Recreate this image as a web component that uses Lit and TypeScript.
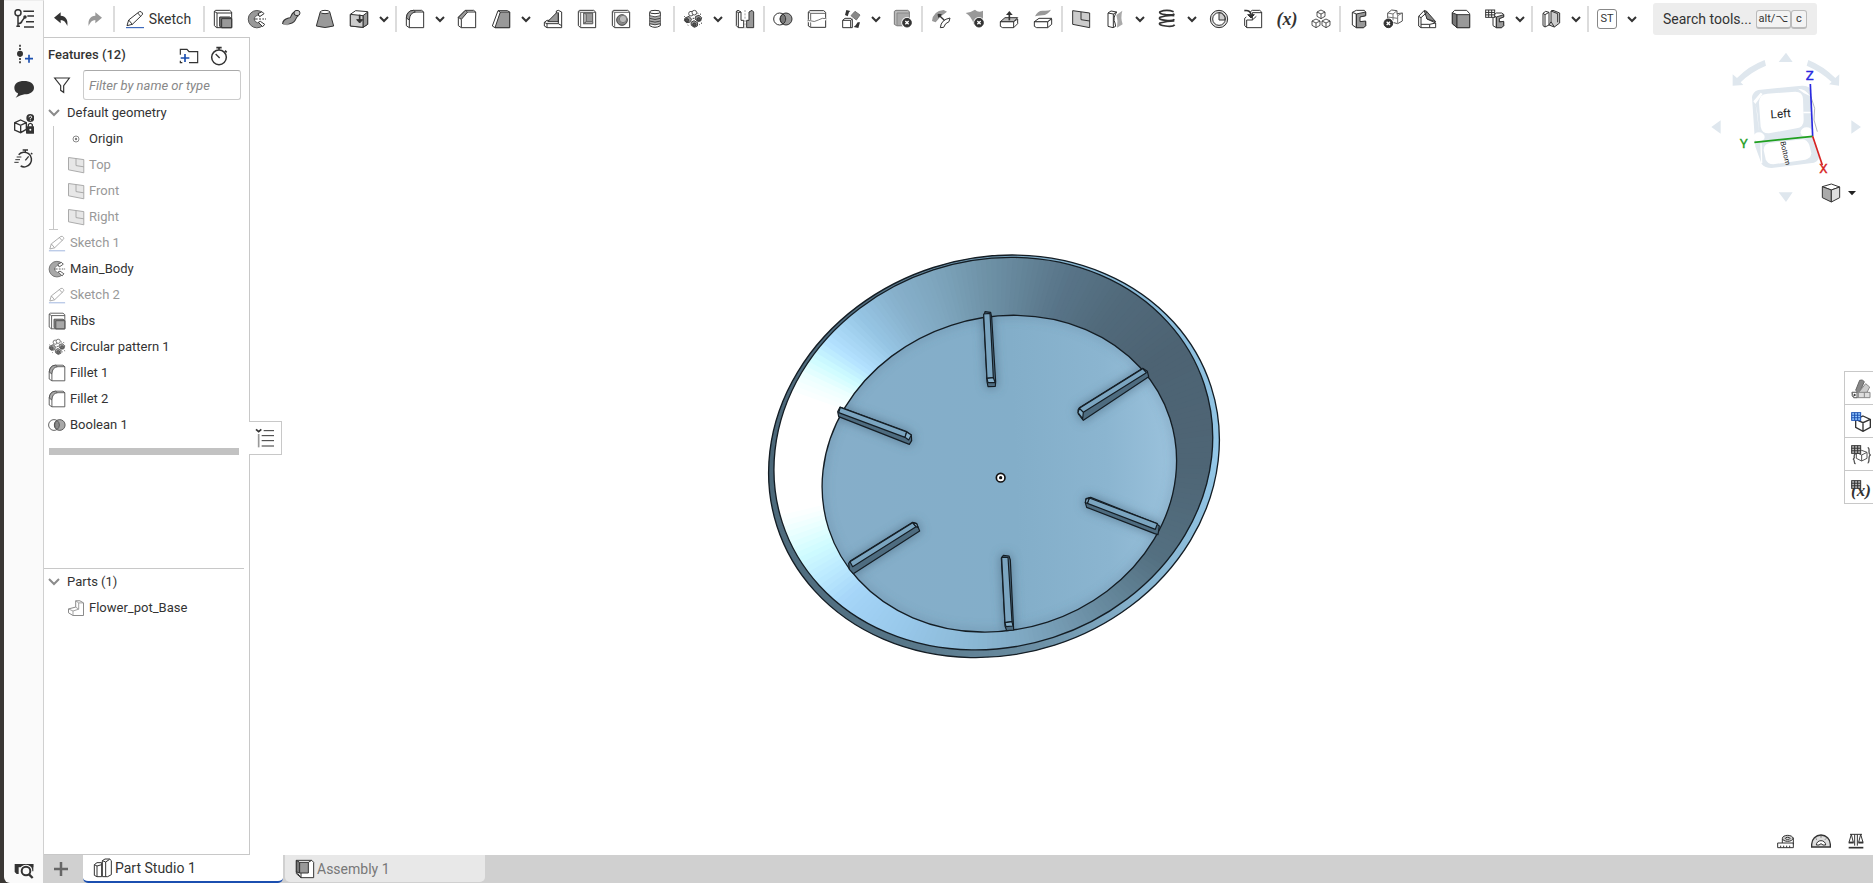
import { LitElement, html, svg, css, nothing } from "lit";
import { customElement, state } from "lit/decorators.js";
import { classMap } from "lit/directives/class-map.js";

// Every glyph is drawn on a 60 x 60 grid.
const D = "#333";
const G = "#999";
const B = "#1b4fb0";

const grid = (x: number, y: number, w: number, h: number, line: string, fill: string) => svg`
  <rect x=${x} y=${y} width=${w} height=${h} fill=${fill} stroke=${line}></rect>
  <path stroke=${line} fill="none" d="M${x} ${y + h / 3}h${w}M${x} ${y + (2 * h) / 3}h${w}M${x + w / 3} ${y}v${h}M${x + (2 * w) / 3} ${y}v${h}"></path>`;

const cross = (x: number, y: number) => svg`
  <circle cx=${x} cy=${y} r="13" fill=${D} stroke=${D}></circle>
  <path d="M${x - 5} ${y - 5}l10 10m0 -10l-10 10" stroke="#fff" stroke-width="4"></path>`;

const smallCube = (x: number, y: number) => svg`
  <path fill="#fff" d="M${x} ${y - 13}l12 6v13l-12 7l-12 -7v-13zM${x - 12} ${y - 7}l12 6l12 -6M${x} ${y - 1}v14"></path>`;

const ICONS: Record<string, unknown> = {
  undo: svg`<path fill=${D} stroke="none" d="M9 26L29 10V20C44 21 52 32 49 51C44 39 39 34 29 33V43Z"></path>`,
  redo: svg`<path fill=${G} stroke="none" d="M51 26L31 10V20C16 21 8 32 11 51C16 39 21 34 31 33V43Z"></path>`,
  sketch: svg`<path fill="#fff" d="M6 50l5 -17L43 8q6 -2 9 4q2 4 -2 7L22 46zM11 33l11 13M38 12l9 10"></path><path stroke=${B} d="M3 56H57"></path>`,
  extrude: svg`<path fill="#fff" d="M4 7L8 4H50L56 9V56H11L4 50Z"></path><path d="M4 7L12 12H56M12 12V56"></path><path fill="#777" d="M20 24H50L56 29V56H26L20 52Z"></path><path fill=${G} d="M26 29H56V56H26Z"></path>`,
  revolve: svg`<path fill=${G} stroke="#555" d="M48 12A26 26 0 1 0 48 49L39 39A11 11 0 1 1 39 21Z"></path><path fill="#fff" d="M33 14l12 -6l6 6l-13 9zM34 40l6 -3l13 9l-6 7z"></path><path d="M22 30h10M36 30h6M46 30h5M54 30h3"></path>`,
  sweep: svg`<path stroke=${D} stroke-width="20" d="M13 46C14 33 26 38 33 32S37 16 50 13"></path><path stroke=${G} stroke-width="14" d="M13 48C14 33 26 38 33 32S37 16 51 13"></path><ellipse cx="48" cy="12" rx="9" ry="8" fill="#ccc"></ellipse>`,
  loft: svg`<path fill=${G} d="M16 8L4 51Q30 60 56 51L44 8Z"></path><ellipse cx="30" cy="9" rx="14" ry="5" fill="#fff"></ellipse>`,
  thicken: svg`<path fill="#fff" d="M4 16L20 5L56 8V46L42 55L4 51Z"></path><path fill=${G} d="M42 20L56 9V46L42 55Z"></path><path fill="#ccc" d="M4 16L42 20V55L4 51Z"></path><path stroke-width="5" d="M32 17V36"></path><path fill=${D} d="M23 32h18l-9 10z"></path>`,
  fillet: svg`<path fill="#fff" d="M13 56L4 50V27Q6 5 25 4H50L56 9V56Z"></path><path fill=${G} d="M4 27Q6 5 25 4L32 9Q14 11 13 33Z"></path><path d="M32 9H56M13 33V56"></path>`,
  chamfer: svg`<path fill="#fff" d="M13 56L4 50V25L25 4H50L56 9V56Z"></path><path fill=${G} d="M4 25L25 4L32 9L13 31Z"></path><path d="M32 9H56M13 31V56"></path>`,
  draft: svg`<path fill="#fff" d="M4 51L21 5H49L56 9V56H12Z"></path><path fill=${G} d="M28 9H56V56H12Z"></path><path d="M21 5L28 9"></path>`,
  rib: svg`<path fill="#fff" d="M4 40L12 34H40V6L46 4L56 9V56H12L4 51Z"></path><path fill=${G} d="M14 38L42 10L46 14V38Z"></path><path d="M12 44H46L56 50M46 10V44M4 40L12 44V56"></path>`,
  shell: svg`<path fill="#fff" d="M4 7L8 4H50L56 9V56H11L4 50Z"></path><path d="M4 7L11 10H56M11 10V56" stroke="#666"></path><path fill=${G} stroke="#555" d="M20 12H47V44H20Z"></path><path fill="#bbb" stroke="#666" d="M20 44L28 38H47V44ZM20 12l8 4v22l-8 6z"></path>`,
  hole: svg`<path fill="#fff" d="M4 7L8 4H50L56 9V56H11L4 50Z"></path><path d="M4 7L11 10H56M11 10V56" stroke="#666"></path><circle cx="33" cy="33" r="16" fill="#888" stroke="#444"></circle><circle cx="36" cy="30" r="11" fill="#bbb" stroke="#777"></circle>`,
  thread: svg`<path fill="#fff" d="M14 10V50Q30 60 46 50V10Z"></path><path fill="#aaa" stroke="none" d="M14 20Q30 27 46 20V44Q30 52 14 44Z"></path><path d="M14 20Q30 27 46 20M14 28Q30 35 46 28M14 36Q30 43 46 36M14 44Q30 51 46 44" stroke-width="2.5"></path><ellipse cx="30" cy="9" rx="16" ry="5" fill="#fff"></ellipse>`,
  pattern: svg`<g fill="#999" stroke="#444"><path d="M6 27l12 -5l8 9l-6 9l-9 1l-7 -6zM38 22l10 -3l8 7l-3 10l-9 1l-8 -7zM24 40l9 -5l11 6l-1 10l-9 4l-9 -6z"></path></g><g fill="#fff" stroke="#555"><circle cx="24" cy="14" r="7"></circle><circle cx="34" cy="11" r="7"></circle></g><g fill="#555" stroke="#333"><circle cx="12" cy="34" r="5"></circle><circle cx="47" cy="31" r="5"></circle><circle cx="34" cy="47" r="5"></circle></g><path d="M43 12l3 2M51 15l3 1M54 42l3 1M4 22l2 2M14 48l2 1M48 46l2 1" stroke-width="3"></path><path d="M29 28h4"></path>`,
  mirror: svg`<path fill="#fff" d="M4 7L9 4L18 9V34H26V56H10L4 50Z"></path><path fill=${G} d="M56 9L51 4L42 9V34H35V56H56Z"></path><path stroke="#777" stroke-dasharray="6 4" stroke-width="2" d="M30 3V58"></path><path d="M4 7L10 11V56M10 11L18 9"></path>`,
  boolean: svg`<circle cx="20" cy="30" r="18" fill="#fff"></circle><circle cx="39" cy="30" r="18" fill=${G}></circle><path fill="#777" d="M30 15A18 18 0 0 1 30 45A18 18 0 0 1 30 15Z"></path>`,
  split: svg`<path fill="#fff" d="M4 9L9 5H50L56 10V55H11L4 51Z"></path><path d="M4 9L11 13H56M11 13V55" stroke="#666"></path><path stroke="#fff" stroke-width="7" d="M2 36H9Q22 42 34 34T58 31"></path><path d="M2 35H9Q22 41 34 33T58 29" stroke-width="2"></path>`,
  transform: svg`<path fill="#fff" d="M5 34L12 28H30L34 32V56H5Z"></path><path d="M5 34H29V56M29 34l5 -4"></path><path fill="#888" stroke="#777" d="M30 20L42 7L57 18L46 33Z"></path><path fill=${D} stroke="none" d="M12 18L16 3L28 6L24 10L20 22ZM57 40L52 57L38 54L44 49L50 40Z"></path>`,
  deletePart: svg`<path fill="#bbb" stroke="#777" d="M4 7L9 4H44L49 8V50H11L4 46Z"></path><path fill="#aaa" stroke="#888" d="M12 12H49V50H12Z"></path><circle cx="42" cy="41" r="17" fill="#fff" stroke="none"></circle>${cross(42, 41)}`,
  modifyFillet: svg`<path fill=${G} stroke="none" d="M3 36Q6 6 38 3L48 8L30 22L14 40Z"></path><path fill="#fff" d="M28 56Q30 32 57 27L54 38Q42 42 38 55Z"></path><path stroke-width="4" d="M40 34L24 19"></path><path fill=${D} d="M21 16l10 1l-8 8z"></path>`,
  deleteFace: svg`<path fill=${G} stroke="none" d="M2 12Q18 10 30 2Q40 12 54 5V32Q42 22 26 46Q20 22 2 12Z"></path><circle cx="42" cy="41" r="17" fill="#fff" stroke="none"></circle>${cross(42, 41)}`,
  moveFace: svg`<path fill="#fff" d="M4 38V52L11 56H44L56 44V30L44 38Z"></path><path fill="#bbb" d="M4 38L18 26H56L44 38Z"></path><path d="M44 38V56"></path><path stroke-width="5" d="M31 34V14"></path><path fill=${D} stroke="none" d="M21 18L31 6L41 18Z"></path>`,
  replaceFace: svg`<path fill="#fff" d="M4 38V52L11 56H44L56 46V30L44 38Z"></path><path fill="#fff" d="M4 38L18 28H56L44 38Z"></path><path d="M44 38V56"></path><path fill=${G} stroke="none" d="M6 22Q14 4 30 5T54 2Q44 18 28 19T6 22Z"></path>`,
  plane: svg`<path fill="#ccc" d="M5 5L56 12V56L5 46Z"></path><path d="M30 9V32L56 36"></path>`,
  offsetFace: svg`<path fill="#fff" d="M9 12L18 6L35 9Q22 28 30 42L32 52L24 56L9 52Z"></path><path d="M9 12L25 15V54M25 15L35 9"></path><path fill="#aaa" stroke="none" d="M34 18L52 5Q46 26 53 46L36 56Q40 36 34 18Z"></path>`,
  helix: svg`<g stroke-width="5"><path d="M50 8Q30 0 9 8Q4 14 26 17Q48 19 52 14M52 20Q30 18 9 25Q2 32 26 34Q48 36 52 31M52 36Q30 36 9 42Q2 48 26 51Q48 54 53 47"></path></g>`,
  clock: svg`<circle cx="30" cy="30" r="26" fill="#ddd"></circle><circle cx="30" cy="30" r="19" fill="#fff"></circle><path fill="#ccc" d="M30 11V33H48A19 19 0 0 0 30 11Z"></path>`,
  derived: svg`<path fill="#fff" d="M22 8L28 4H50L56 9V56H12L5 50V28L10 24"></path><path d="M28 11H56M11 33H28V11M11 33V56M28 33L40 22"></path><path stroke-width="5" d="M4 5Q20 2 24 16"></path><path fill=${D} d="M14 17H34L24 27Z"></path>`,
  cubes: svg`<g stroke-width="2.5">${smallCube(30, 16)}${smallCube(15, 43)}${smallCube(45, 43)}</g>`,
  sheet: svg`<path fill="#fff" d="M10 10L22 4H46L50 9V20L40 22L26 24V38H50V50L44 56H22L10 48Z"></path><path fill=${G} d="M22 15L50 9V20L33 24V38L50 36V50L44 56H22Z"></path><path d="M10 10L22 15V56"></path>`,
  sheetJoint: svg`<path fill="#fff" stroke="#555" d="M14 12L26 3L42 5V14L58 12V36L44 44L14 36Z"></path><path stroke="#777" d="M14 12L30 15V34M30 15L42 5M42 14L44 20V42M44 20L58 12M14 24L44 28"></path><circle cx="16" cy="43" r="16" fill="#fff" stroke="none"></circle>${cross(16, 43)}`,
  flange: svg`<path fill="#fff" d="M5 22L22 4L30 10V30L56 42V56H12L5 51Z"></path><path fill="#888" d="M22 6L28 6L56 38L30 30Z"></path><path d="M5 22L12 26V56M12 46H38L56 42M38 46V56M12 26L30 10"></path>`,
  solid: svg`<path fill="#fff" d="M4 11L11 4H47L56 14V56H18L4 44Z"></path><path fill="#777" d="M4 11L18 17V56L4 44Z"></path><path fill=${G} d="M18 17H56V56H18Z"></path>`,
  tableSheet: svg`<path fill="#fff" d="M24 20L34 12H50L56 16V24L42 28V38H56V50L50 56H34L24 50Z"></path><path fill=${G} d="M34 24L56 17V24L43 29V39L56 37V50L50 56H34Z"></path><path d="M24 20L34 24V56"></path>${grid(2, 3, 27, 22, D, "#fff")}`,
  bend: svg`<path fill="#fff" d="M6 13L14 7L24 10V48L12 54L6 50Z"></path><path fill="#ccc" d="M30 38L30 6L36 4L56 12V42L40 54L24 48Z"></path><path d="M12 17V54M6 13L12 17L24 10M30 38L40 54M30 6L50 14V40"></path>`,
  tree: svg`<g stroke-width="4.5"><circle cx="12" cy="11" r="9"></circle><path d="M12 20V52M7 52H18M12 44Q22 44 24 36L32 25"></path><circle cx="33" cy="24" r="3" fill=${D}></circle><path d="M28 7H60M40 21H60M36 38H60M30 54H60"></path></g>`,
  version: svg`<path stroke-width="5" stroke-dasharray="6 4" d="M18 2V60"></path><circle cx="18" cy="29" r="9" fill=${D} stroke="none"></circle><path stroke=${B} stroke-width="5" d="M33 44H57M45 32V56"></path>`,
  comment: svg`<path fill=${D} stroke="none" d="M30 6C48 6 60 14 60 26S48 46 32 46Q18 48 5 56Q13 49 12 43Q1 38 1 26C1 14 12 6 30 6Z"></path>`,
  help: svg`<g stroke-width="4"><path fill="#fff" d="M20 18L37 26V46L20 56L2 48V26ZM2 26L20 34L37 26M20 34V56"></path></g><circle cx="49" cy="12" r="12" fill=${D} stroke="none"></circle><path stroke="#fff" stroke-width="3" d="M45 10Q45 6 49 6T53 10Q53 12 49 14V16M49 18v2"></path><path stroke-width="4" d="M43 38V32Q49 24 55 32V38"></path><rect x="36" y="37" width="25" height="22" rx="2" fill=${D} stroke="none"></rect><circle cx="49" cy="47" r="3" fill="#fff" stroke="none"></circle>`,
  history: svg`<g stroke-width="4.5"><path d="M14 17A22 22 0 1 1 20 51"></path><path d="M26 3H42M34 3V9M51 12L55 16M34 34L44 22" stroke-width="4"></path><path d="M8 24H22M4 32H18M1 40H14" stroke-width="3"></path></g>`,
  searchTabs: svg`<path fill=${D} stroke="none" d="M2 12H58V22H2ZM2 22H14V42H8L2 36Z"></path><g stroke="#fafafa" stroke-width="14"><circle cx="36" cy="34" r="13" fill="#fafafa"></circle></g><circle cx="36" cy="33" r="13" stroke-width="6"></circle><path stroke-width="7" d="M45 43L56 54"></path><path stroke="none" fill=${D} d="M52 12H58V34H55Q55 20 45 14Z"></path>`,
  folder: svg`<path stroke-width="3.5" d="M4 26V10H24L30 17H56V50H30M4 44V50H10"></path><path stroke=${B} stroke-width="5" d="M5 36H31M18 24V48"></path>`,
  stopwatch: svg`<circle cx="30" cy="34" r="22" stroke-width="4.5"></circle><path stroke-width="5" d="M22 5H38M30 5V11M48 14L53 19"></path><path stroke-width="4" d="M20 24L32 36"></path>`,
  funnel: svg`<path stroke-width="3.5" d="M8 9H52L35 32V52L26 46V32Z"></path>`,
  origin: svg`<circle cx="30" cy="30" r="10" stroke="#666" stroke-width="3"></circle><circle cx="30" cy="30" r="4" fill="#666" stroke="none"></circle>`,
  part: svg`<path fill="#fff" stroke="#666" d="M29 6L43 6L55 13V55H20L5 46V33L29 27Z"></path><path stroke="#888" d="M29 6L39 13H55M39 13V34L20 40L5 33M20 40V55M29 27L39 34"></path>`,
  list: svg`<path stroke-width="5" d="M3 4L11 11L19 4"></path><path d="M26 8H57M20 23H57M20 38H57M20 54H57"></path><path stroke=${G} stroke-width="5" d="M11 18V58"></path>`,
  studio: svg`<path fill="#fff" d="M4 20L12 14H26V56H12L4 52ZM4 20L12 24L26 20M12 24V56"></path><path fill="#fff" d="M28 8L36 3H50L55 8V50L44 56H28ZM28 8L38 12V56M38 12L50 4"></path>`,
  assembly: svg`<path fill="#fff" d="M4 4H50L56 10V56H18L4 44Z"></path><path fill="#777" d="M4 4L14 10V42L4 38Z"></path><path fill=${G} d="M14 10H40V42H14Z"></path><path d="M4 38L18 56M40 10L50 4M18 42V56"></path>`,
  appearance: svg`<path fill="#888" stroke="#666" d="M14 34L26 4Q34 0 40 8L24 44Z"></path><path fill="#ccc" stroke="#888" d="M22 42L44 14L56 24L48 40Z"></path><path fill="#ddd" stroke="#888" d="M3 40H57V56H8Q1 54 3 40Z"></path><path stroke="#888" d="M22 40V56M40 40V56"></path><path fill="#fff" d="M3 40H18V56H8Z" stroke="#666"></path><circle cx="11" cy="48" r="2" fill=${D}></circle>`,
  configTable: svg`<path fill="#fff" d="M36 12L58 22V46L36 58L14 46V22ZM14 22L36 32L58 22M36 32V58" stroke-width="4"></path>${grid(2, 2, 27, 23, B, "#9cf")}`,
  customTable: svg`<g stroke="#555"><path fill="#fff" d="M32 16L48 22V40L32 48L16 40V22ZM16 22L32 30L48 22M32 30V48"></path></g><path stroke-width="4" stroke="#555" d="M14 26Q8 28 10 38Q8 42 6 42Q10 44 10 50Q10 56 14 56M50 8Q55 8 54 20Q54 28 58 30Q54 32 54 42Q54 54 50 54"></path>${grid(2, 2, 27, 23, D, "#bbb")}`,
  tape: svg`<path fill="#fff" stroke-width="3" d="M5 36H52V50H5ZM14 50v-6M23 50v-6M32 50v-6M41 50v-6"></path><ellipse cx="35" cy="22" rx="16" ry="9" fill="#ccc"></ellipse><ellipse cx="35" cy="22" rx="7" ry="3" fill="#fff"></ellipse><path d="M52 20V40M19 24V36"></path>`,
  protractor: svg`<path fill="#ddd" stroke-width="4" d="M2 48V40A28 28 0 0 1 58 40V48Z"></path><path fill="#fff" d="M16 42A14 13 0 0 1 44 42H36Q30 34 24 42Z"></path><path stroke-width="2" d="M30 14v6M14 22l4 4M46 22l-4 4"></path>`,
  scale: svg`<path stroke-width="5" d="M8 50H52"></path><path stroke-width="3" d="M12 10H48M26 10V44M34 10V44M16 10L9 34H22ZM44 10L38 34H51Z"></path><path stroke-width="5" d="M8 35H23M37 35H52"></path>`,
};

const icon = (name: string, size = 20) =>
  html`<svg class="icon" width=${size} height=${size} viewBox="0 0 60 60" fill="none" stroke=${D} stroke-width="3" aria-hidden="true">${ICONS[name]}</svg>`;

const chevron = html`<svg width="12" height="12" viewBox="0 0 12 12" fill="none" stroke="#333" stroke-width="2" aria-hidden="true"><path d="M2 4L6 8L10 4"></path></svg>`;

const base = css`
  :host { display: block; color: #333; font: 14px/20px Roboto, "Noto Sans", sans-serif; }
  * { box-sizing: border-box; }
  button { font: inherit; color: inherit; background: none; border: 0; padding: 0; margin: 0; cursor: pointer; display: flex; align-items: center; justify-content: center; }
  svg { display: block; flex: none; }
  ul { list-style: none; margin: 0; padding: 0; }
`;

// "+" opens a menu after the tool, "|" ends a group.
const TOOLS: [string, string, string?][] = [
  ["extrude", "Extrude"], ["revolve", "Revolve"], ["sweep", "Sweep"], ["loft", "Loft"], ["thicken", "Thicken", "+|"],
  ["fillet", "Fillet", "+"], ["chamfer", "Chamfer"], ["draft", "Draft", "+"], ["rib", "Rib"], ["shell", "Shell"], ["hole", "Hole"], ["thread", "External thread", "|"],
  ["pattern", "Circular pattern", "+"], ["mirror", "Mirror", "|"],
  ["boolean", "Boolean"], ["split", "Split"], ["transform", "Transform", "+"], ["deletePart", "Delete part", "|"],
  ["modifyFillet", "Modify fillet"], ["deleteFace", "Delete face"], ["moveFace", "Move face"], ["replaceFace", "Replace face", "|"],
  ["plane", "Plane"], ["offsetFace", "Offset surface", "+"], ["helix", "Helix", "+"], ["clock", "Mate connector"], ["derived", "Derived"], ["variable", "Variable"], ["cubes", "Composite part", "|"],
  ["sheet", "Sheet metal model"], ["sheetJoint", "Finish sheet metal"], ["flange", "Flange"], ["solid", "Frame"], ["tableSheet", "Sheet metal table", "+|"],
  ["bend", "Bend", "+|"],
];

@customElement("tool-bar")
class ToolBar extends LitElement {
  static styles = [base, css`
    .bar { display: flex; align-items: center; height: 38px; background: #fff; }
    .tool { width: 34px; height: 34px; flex: none; }
    .menu { width: 18px; height: 34px; padding-right: 2px; flex: none; }
    .sep { width: 2px; height: 26px; margin: 0 1px; background: #dcdcdc; flex: none; }
    .sketch { width: 86px; height: 34px; gap: 4px; padding-right: 2px; flex: none; }
    .var { font: italic bold 18px/20px "Liberation Serif", serif; }
    .st { width: 20px; height: 20px; border: 1px solid #888; border-radius: 3px; font-size: 11px; line-height: 18px; text-align: center; }
    .search { height: 32px; margin-left: 11px; padding: 0 10px; background: #ededed; border-radius: 3px; flex: none; }
    kbd { font: 11px/16px Roboto, "DejaVu Sans", sans-serif; border: 1px solid #bbb; border-bottom-width: 2px; border-radius: 3px; height: 19px; padding: 0 4px; background: #f3f3f3; }
    kbd:first-of-type { margin-left: 4px; padding: 0 2px; }
  `];
  render() {
    const sep = html`<span class="sep"></span>`;
    const menu = (label: string) => html`<button class="menu" aria-label="${label} menu">${chevron}</button>`;
    return html`<div class="bar" role="toolbar">
      <button class="tool" aria-label="Undo">${icon("undo")}</button>
      <button class="tool" aria-label="Redo">${icon("redo")}</button>
      ${sep}
      <button class="sketch">${icon("sketch")}<span>Sketch</span></button>
      ${sep}
      ${TOOLS.map(([name, label, after = ""]) => html`
        <button class="tool" aria-label=${label}>${name === "variable" ? html`<span class="var">(x)</span>` : icon(name)}</button>
        ${after.includes("+") ? menu(label) : nothing}${after.includes("|") ? sep : nothing}`)}
      <button class="tool" aria-label="Custom tool"><span class="st">ST</span></button>
      ${menu("Custom tool")}
      <button class="search"><span>Search tools...</span><kbd>alt/⌥</kbd><kbd>c</kbd></button>
    </div>`;
  }
}

@customElement("side-rail")
class SideRail extends LitElement {
  static styles = [base, css`
    nav { height: 100%; width: 40px; display: flex; flex-direction: column; background: #fafafa; border-right: 1px solid #d0d0d0; border-top: 1px solid #eee; border-bottom-left-radius: 6px; }
    button { height: 35px; }
    .last { margin-top: auto; height: 26px; }
  `];
  render() {
    const item = (name: string, label: string, last = false) =>
      html`<button class=${classMap({ last })} aria-label=${label}>${icon(name)}</button>`;
    return html`<nav>
      ${item("tree", "Feature list")}${item("version", "Create version")}${item("comment", "Comments")}
      ${item("help", "Properties")}${item("history", "History")}${item("searchTabs", "Search tabs", true)}
    </nav>`;
  }
}

type Row = { name: string; icon: string; dim?: boolean };
const GEOMETRY: Row[] = [
  { name: "Origin", icon: "origin" }, { name: "Top", icon: "plane", dim: true },
  { name: "Front", icon: "plane", dim: true }, { name: "Right", icon: "plane", dim: true },
];
const FEATURES: Row[] = [
  { name: "Sketch 1", icon: "sketch", dim: true }, { name: "Main_Body", icon: "revolve" },
  { name: "Sketch 2", icon: "sketch", dim: true }, { name: "Ribs", icon: "extrude" },
  { name: "Circular pattern 1", icon: "pattern" }, { name: "Fillet 1", icon: "fillet" },
  { name: "Fillet 2", icon: "fillet" }, { name: "Boolean 1", icon: "boolean" },
];

@customElement("feature-panel")
class FeaturePanel extends LitElement {
  @state() private open = true;
  static styles = [base, css`
    .panel { height: 100%; width: 206px; display: flex; flex-direction: column; background: #fff; border: 1px solid #c8c8c8; border-left: 0; }
    .head { display: flex; align-items: center; height: 32px; padding: 3px 20px 0 4px; gap: 10px; }
    h2 { margin: 0 auto 0 0; padding-bottom: 2px; font-size: 13px; line-height: 20px; font-weight: 500; }
    .filter { display: flex; align-items: center; height: 30px; padding: 0 8px; gap: 11px; }
    .filter label { width: 20px; }
    input { flex: 1; min-width: 0; height: 30px; font: inherit; font-size: 13px; color: inherit; border: 1px solid #ccc; border-top-color: #aaa; border-radius: 3px; padding: 0 5px; }
    input::placeholder { color: #888; font-style: italic; opacity: 1; }
    .row { display: flex; align-items: center; height: 26px; padding-left: 4px; gap: 4px; width: 100%; justify-content: flex-start; font-size: 13px; }
    .group { gap: 7px; }
    .dim { color: #999; }
    .row svg { opacity: 0.85; }
    .dim svg { opacity: 0.45; }
    .nested { margin-left: 9px; border-left: 1px solid #c8c8c8; }
    .nested .row { padding-left: 13px; }
    .foot { width: 9px; height: 1px; margin: -1px 0 0 5px; background: #c8c8c8; }
    .bar { height: 7px; margin: 10px 10px 0 5px; background: #c2c2c2; }
    .parts { margin: auto 5px 0 0; border-top: 1px solid #c8c8c8; flex: 0 0 35%; }
    .parts .leaf { padding-left: 23px; }
  `];
  private row(r: Row) {
    return html`<li class="row ${classMap({ dim: !!r.dim })}">${icon(r.icon, 18)}<span>${r.name}</span></li>`;
  }
  render() {
    const arrow = html`<svg width="12" height="12" viewBox="0 0 12 12" fill="none" stroke="#777" stroke-width="2"><path d="M1 3L6 8L11 3"></path></svg>`;
    return html`<section class="panel">
      <div class="head"><h2>Features (12)</h2>
        <button aria-label="Add folder">${icon("folder")}</button>
        <button aria-label="Regeneration time">${icon("stopwatch")}</button></div>
      <div class="filter"><label for="filter" aria-label="Filter">${icon("funnel")}</label>
        <input id="filter" type="text" placeholder="Filter by name or type"></div>
      <div class="tree">
        <button class="row group" @click=${() => (this.open = !this.open)}>${arrow}<span>Default geometry</span></button>
        ${this.open ? html`<ul class="nested">${GEOMETRY.map((r) => this.row(r))}</ul><div class="foot"></div>` : nothing}
        <ul>${FEATURES.map((r) => this.row(r))}</ul>
        <div class="bar"></div>
      </div>
      <div class="parts">
        <button class="row group">${arrow}<span>Parts (1)</span></button>
        <ul><li class="row leaf">${icon("part", 18)}<span>Flower_pot_Base</span></li></ul>
      </div>
    </section>`;
  }
}

// Shading around the wall and the lip: [degrees clockwise from east, r, g, b].
type Stop = [number, number, number, number];
const WALL: Stop[] = [
  [0, 78, 101, 117], [30, 84, 112, 129], [45, 97, 130, 149], [65, 114, 151, 174], [92, 136, 180, 208], [119, 152, 200, 234],
  [137, 165, 213, 248], [147, 190, 236, 255], [154, 208, 252, 255], [161, 236, 255, 255], [166, 255, 255, 255], [198, 255, 255, 255],
  [204, 236, 255, 255], [209, 206, 252, 255], [215, 180, 226, 255], [226, 150, 197, 228], [238, 135, 176, 203], [250, 126, 166, 190],
  [265, 111, 147, 168], [279, 98, 130, 150], [290, 88, 116, 136], [306, 81, 106, 123], [326, 77, 99, 115], [360, 78, 101, 117],
];
const LIP: Stop[] = [
  [0, 147, 199, 232], [45, 134, 178, 205], [80, 105, 140, 161], [120, 85, 116, 134], [180, 75, 103, 120],
  [230, 84, 112, 130], [265, 115, 157, 182], [290, 134, 180, 208], [360, 147, 199, 232],
];
const shade = (stops: Stop[], a: number) => {
  const i = Math.max(1, stops.findIndex((s) => s[0] >= a));
  const p = stops[i - 1], q = stops[i], t = (a - p[0]) / (q[0] - p[0]);
  return `rgb(${[1, 2, 3].map((k) => Math.round(p[k] + (q[k] - p[k]) * t)).join(",")})`;
};
const wedges = (stops: Stop[], cx: number, cy: number) =>
  Array.from({ length: 240 }, (_, i) => {
    const a = i * 1.5;
    const pt = (d: number) => `${(cx + 900 * Math.cos((d * Math.PI) / 180)).toFixed(1)} ${(cy + 900 * Math.sin((d * Math.PI) / 180)).toFixed(1)}`;
    return svg`<path d="M${cx} ${cy}L${pt(a)}L${pt(a + 2)}Z" fill=${shade(stops, a)}></path>`;
  });

// Each rib: silhouette, lit top face, end face.
const RIBS: [string, string, string][] = [
  ["731,262 735,245 752,247 755,262 767,455 766,469 744,470 741,455", "731,252 750,250 760,443 741,445", "741,445 760,443 766,458 744,458"],
  ["1014,540 1018,533 1208,415 1222,424 1226,440 1030,571 1015,552", "1018,535 1208,416 1219,428 1030,547", "1018,535 1030,547 1028,566 1014,548"],
  ["1038,806 1052,802 1248,880 1258,888 1254,914 1244,911 1040,832 1036,818", "1048,804 1252,881 1246,898 1042,820", "1038,808 1048,804 1042,820 1036,818"],
  ["784,984 790,976 807,978 811,990 821,1200 800,1202 795,1188", "785,982 804,982 816,1175 795,1178", "795,1178 816,1175 819,1188 798,1190"],
  ["326,1000 332,992 518,877 530,881 539,903 340,1031 328,1018", "330,995 518,878 528,890 338,1010", "518,878 530,881 534,892 528,890"],
  ["293,545 300,531 500,605 514,615 515,632 508,643 296,560", "301,532 500,606 495,622 296,548", "495,622 500,606 514,615 506,630"],
];

@customElement("model-view")
class ModelView extends LitElement {
  static styles = [base, css`
    :host { min-height: 0; }
    .stage { height: 100%; display: flex; justify-content: center; padding: 193px 134px 0 0; }
  `];
  render() {
    const outer = svg`<ellipse rx="684" ry="595" transform="translate(762 679) rotate(-17.8)"></ellipse>`;
    const rim = svg`<ellipse rx="666" ry="580" transform="translate(760 671) rotate(-18.1)"></ellipse>`;
    const floor = svg`<ellipse rx="538" ry="468" transform="translate(778 731) rotate(-18)"></ellipse>`;
    return html`<div class="stage"><svg width="510" height="450" viewBox="0 0 1530 1350" role="img" aria-label="Flower pot base">
      <defs>
        <clipPath id="outer">${outer}</clipPath><clipPath id="rim">${rim}</clipPath><clipPath id="floor">${floor}</clipPath>
        <linearGradient id="base" x1="0" y1="0.35" x2="1" y2="0.6"><stop offset="0" stop-color="#86aec9"></stop><stop offset="0.55" stop-color="#83aec9"></stop><stop offset="0.8" stop-color="#8bb5d0"></stop><stop offset="1" stop-color="#9cc3dd"></stop></linearGradient>
        <filter id="soft" x="-20%" y="-20%" width="140%" height="140%"><feGaussianBlur stdDeviation="14"></feGaussianBlur></filter>
      </defs>
      <g clip-path="url(#outer)">${wedges(LIP, 762, 679)}</g>
      <g clip-path="url(#rim)">${wedges(WALL, 770, 700)}</g>
      <g fill="url(#base)">${floor}</g>
      <g clip-path="url(#floor)">
        <g fill="none" stroke="#4f7088" stroke-opacity="0.25" stroke-width="22" filter="url(#soft)">${floor}</g>
        <g fill="#4a6a80" fill-opacity="0.5" stroke="#4a6a80" stroke-opacity="0.35" stroke-width="16" filter="url(#soft)">${RIBS.map(([body]) => svg`<polygon points=${body}></polygon>`)}</g>
      </g>
      <g fill="none" stroke="#141d24" stroke-width="4">${floor}${rim}${outer}</g>
      <g stroke="#141d24" stroke-width="3.5" stroke-linejoin="round">
        ${RIBS.map(([body, top, end]) => svg`<polygon points=${body} fill="#4e6c80"></polygon><polygon points=${top} fill="#7ba5c0"></polygon><polygon points=${end} fill="#86b0ca"></polygon>`)}
      </g>
      <circle cx="782" cy="743" r="13" fill="#fff" stroke="#111" stroke-width="5"></circle><circle cx="782" cy="743" r="5" fill="#111"></circle>
    </svg></div>`;
  }
}

@customElement("view-cube")
class ViewCube extends LitElement {
  static styles = [base, css`
    text { font-family: Roboto, sans-serif; text-anchor: middle; }
    .axis { font-size: 40px; }
    .face { font-size: 35px; fill: #222; }
    .small { font-size: 22px; fill: #222; }
  `];
  render() {
    return html`<svg width="183" height="180" viewBox="0 0 549 540" role="img" aria-label="View cube">
      <g fill="#dfe7ee">
        <path d="M266 66H308L288 38ZM64 261L92 241V281ZM513 261L484 241V281ZM266 457H308L288 486Z"></path>
        <path d="M128 103V137L160 135L152 127Q182 96 228 77L224 60Q176 78 141 114ZM448 103L447 137L417 133L425 126Q394 96 350 77L355 60Q400 78 436 114Z"></path>
        <path d="M186 172Q188 155 205 150L335 137Q356 136 362 148L367 288L388 345Q388 362 372 368L245 384Q224 384 215 372L196 320Z"></path>
      </g>
      <g fill="#fff">
        <path d="M232 161L316 155Q338 155 339 177L341 240Q341 262 320 265L237 280Q216 281 212 260L207 188Q207 163 232 161Z"></path>
        <path d="M238 309L338 298Q352 300 358 315L364 340Q362 356 346 359L250 373Q232 373 227 358L221 330Q221 313 238 309Z"></path>
        <ellipse cx="207" cy="291" rx="17" ry="14"></ellipse><ellipse cx="350" cy="277" rx="18" ry="15"></ellipse>
        <path d="M190 184L212 158L218 162L196 192ZM324 146Q346 146 360 168L342 160ZM340 215H366V220H340ZM200 215L196 190L202 220L208 280Z"></path>
      </g>
      <path d="M213 310L215 370" stroke="#fff" stroke-width="4"></path>
      <path d="M361 165L374 205L372 240L382 275" fill="none" stroke="#8d949a" stroke-width="2"></path>
      <g stroke-width="5"><path d="M361 132L368 288" stroke="#2a2ae0"></path><path d="M193 307L368 289" stroke="#1fa01f"></path><path d="M368 289L397 375" stroke="#d62222"></path></g>
      <g stroke-width="1">
        <text class="axis" x="359" y="121" fill="#2a2ae0" stroke="#2a2ae0">Z</text>
        <text class="axis" x="161" y="325" fill="#1fa01f" stroke="#1fa01f">Y</text>
        <text class="axis" x="400" y="399" fill="#d62222" stroke="#d62222">X</text>
      </g>
      <text class="face" transform="translate(273 233) rotate(-4)">Left</text>
      <text class="small" transform="translate(279 341) rotate(77)">Bottom</text>
      <g stroke="#333" stroke-width="3" stroke-linejoin="round">
        <path d="M397 440L424 432L449 441L424 450Z" fill="#fff"></path><path d="M397 440L424 450V486L397 473Z" fill="#aaa"></path><path d="M449 441L424 450V486L449 473Z" fill="#ddd"></path>
      </g>
      <path d="M474 453H498L486 466Z" fill="#222"></path>
    </svg>`;
  }
}

@customElement("tab-bar")
class TabBar extends LitElement {
  static styles = [base, css`
    .tabs { display: flex; height: 28px; background: #d0d0d0; }
    .add { width: 33px; margin-right: 6px; }
    .tab { width: 200px; height: 27px; justify-content: flex-start; gap: 2px; padding: 0 10px; border-radius: 0 0 5px 5px; background: #e8e8e8; color: #777; margin-right: 2px; }
    .active { height: 28px; background: #fff; color: #333; border-bottom: 2px solid #1b4fb0; }
  `];
  render() {
    return html`<div class="tabs" role="tablist">
      <button class="add" aria-label="Insert new tab"><svg width="16" height="16" viewBox="0 0 16 16" stroke="#666" stroke-width="2.5"><path d="M1 8H15M8 1V15"></path></svg></button>
      <button class="tab active" role="tab" aria-selected="true">${icon("studio")}<span>Part Studio 1</span></button>
      <button class="tab" role="tab" aria-selected="false">${icon("assembly")}<span>Assembly 1</span></button>
    </div>`;
  }
}

@customElement("app-root")
class AppRoot extends LitElement {
  static styles = [base, css`
    .app { display: grid; grid-template: auto minmax(0, 1fr) auto / auto minmax(0, 1fr); height: 100vh; overflow: hidden; background: #fff; border-left: 4px solid #3a3734; }
    .edge { grid-row: 1 / -1; background: #3a3734; }
    tool-bar { min-width: 0; }
    .work { position: relative; display: flex; min-height: 0; margin-top: -1px; }
    feature-panel { flex: none; }
    model-view { flex: 1; min-width: 0; }
    tab-bar { grid-column: 2; }
    .flyout { position: absolute; left: 205px; top: 47%; width: 33px; height: 34px; border: 1px solid #c8c8c8; border-left: 0; background: #fff; }
    view-cube { position: absolute; top: 3px; right: 0; }
    .dock { position: absolute; right: 0; top: 334px; width: 29px; border: 1px solid #c8c8c8; border-right: 0; background: #fff; }
    .dock button { width: 28px; height: 33px; padding: 2px 0 0 4px; border-bottom: 1px solid #c8c8c8; }
    .dock button:last-child { border-bottom: 0; height: 32px; }
    .varTable { display: grid; place-items: center; width: 20px; height: 20px; }
    .varTable > * { grid-area: 1 / 1; }
    .varTable span { font: italic bold 17px/20px "Liberation Serif", serif; padding-top: 3px; }
    .measure { position: absolute; right: 7px; bottom: 4px; display: flex; gap: 15px; }
  `];
  render() {
    return html`<div class="app">
      <side-rail class="edge"></side-rail>
      <tool-bar></tool-bar>
      <main class="work">
        <feature-panel></feature-panel>
        <model-view></model-view>
        <button class="flyout" aria-label="Toggle feature list">${icon("list")}</button>
        <view-cube></view-cube>
        <div class="dock">
          <button aria-label="Appearances">${icon("appearance")}</button>
          <button aria-label="Configurations">${icon("configTable")}</button>
          <button aria-label="Custom tables">${icon("customTable")}</button>
          <button aria-label="Variable table"><span class="varTable"><span>(x)</span>
            <svg width="20" height="20" viewBox="0 0 60 60" stroke-width="3">${grid(2, 2, 27, 23, D, "#bbb")}</svg></span></button>
        </div>
        <div class="measure">
          <button aria-label="Measure">${icon("tape")}</button>
          <button aria-label="Angle">${icon("protractor")}</button>
          <button aria-label="Mass properties">${icon("scale")}</button>
        </div>
      </main>
      <tab-bar></tab-bar>
    </div>`;
  }
}
